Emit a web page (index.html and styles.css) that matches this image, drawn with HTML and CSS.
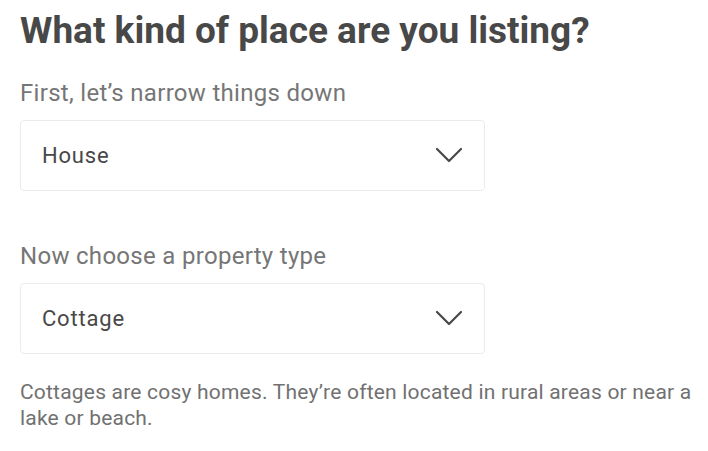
FILE: index.html
```html
<!DOCTYPE html>
<html lang="en">
<head>
    <meta charset="UTF-8">
    <meta name="viewport" content="width=device-width, initial-scale=1.0">
    <title>Listing type</title>
    <link rel="stylesheet" href="styles.css">
</head>
<body>

    <div class="listing">
        <h1 class="heading">What kind of place are you listing?</h1>

        <div class="field">
            <div class="label">First, let’s narrow things down</div>
            <div class="select">
                <span class="value">House</span>
                <svg class="chevron" width="28" height="17" viewBox="0 0 28 17">
                    <path d="M2 2 L14 14 L26 2" fill="none" stroke="#484848" stroke-width="2.2" stroke-linecap="round" stroke-linejoin="round"/>
                </svg>
            </div>
        </div>

        <div class="field">
            <div class="label">Now choose a property type</div>
            <div class="select">
                <span class="value">Cottage</span>
                <svg class="chevron" width="28" height="17" viewBox="0 0 28 17">
                    <path d="M2 2 L14 14 L26 2" fill="none" stroke="#484848" stroke-width="2.2" stroke-linecap="round" stroke-linejoin="round"/>
                </svg>
            </div>
            <p class="hint">Cottages are cosy homes. They’re often located in rural areas or near a lake or beach.</p>
        </div>
    </div>

</body>
</html>
```

FILE: styles.css
```css
body {
    margin: 0;
    background: #fff;
    font-family: Roboto, "Liberation Sans", sans-serif;
    color: #484848;
}

.listing {
    padding: 9px 8px 0 20px;
}

.heading {
    margin: 0;
    font-size: 37px;
    line-height: 44px;
    font-weight: 700;
}

.field {
    margin-top: 25px;
}

.field + .field {
    margin-top: 50px;
}

.label {
    font-size: 24px;
    line-height: 30px;
    letter-spacing: 0.3px;
    color: #767676;
}

.select {
    width: 465px;
    height: 71px;
    box-sizing: border-box;
    margin-top: 12px;
    border: 1px solid #ebebeb;
    border-radius: 4px;
    padding: 0 21px 0 21px;
    display: flex;
    align-items: center;
    justify-content: space-between;
}

.value {
    font-size: 22px;
    letter-spacing: 0.8px;
}

.hint {
    margin: 25px 0 0;
    font-size: 21px;
    line-height: 26px;
    letter-spacing: 0.2px;
    color: #717171;
}
```
